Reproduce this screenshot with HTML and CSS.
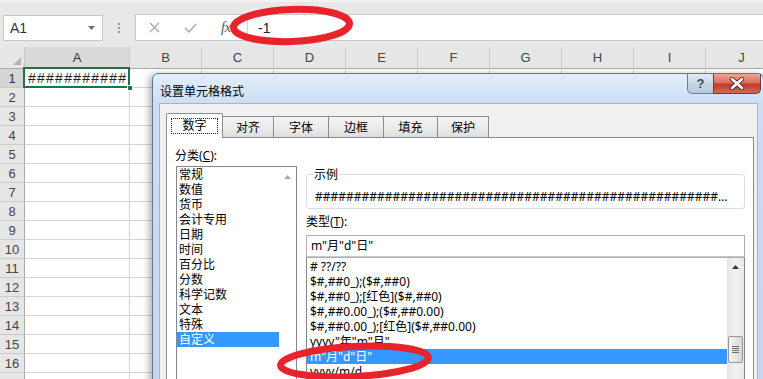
FILE: index.html
```html
<!DOCTYPE html>
<html>
<head>
<meta charset="utf-8">
<title>设置单元格格式</title>
<link rel="stylesheet" href="styles.css">
</head>
<body>
<div class="topbar">
  <div class="namebox"><span>A1</span><svg width="7" height="4" viewBox="0 0 7 4"><path d="M0 0h7L3.5 4z" fill="#707070"/></svg></div>
  <div class="grip"><i></i><i></i><i></i></div>
  <div class="formula">
    <span class="fbtn"><svg width="11" height="11" viewBox="0 0 11 11"><path d="M1 1l9 9M10 1l-9 9" stroke="#a8a8a8" stroke-width="1.3" fill="none"/></svg></span>
    <span class="fbtn"><svg width="13" height="10" viewBox="0 0 13 10"><path d="M1 5l4 4 7-8" fill="none" stroke="#a8a8a8" stroke-width="1.4"/></svg></span>
    <span class="fbtn fx">fx</span>
    <span class="fsep"></span>
    <span class="fval">-1</span>
  </div>
</div>

<div class="sheet">
  <div class="hd corner"><svg width="10" height="10" viewBox="0 0 10 10"><path d="M9 1v8H1z" fill="#b4b4b4"/></svg></div>
  <div class="hd on">A</div><div class="hd">B</div><div class="hd">C</div><div class="hd">D</div><div class="hd">E</div><div class="hd">F</div><div class="hd">G</div><div class="hd">H</div><div class="hd">I</div><div class="hd">J</div>

  <div class="rh on">1</div><div class="c a1"><span class="hash">###########</span><span class="sel"></span><span class="handle"></span></div><div class="c"></div><div class="c"></div><div class="c"></div><div class="c"></div><div class="c"></div><div class="c"></div><div class="c"></div><div class="c"></div><div class="c"></div>
  <div class="rh">2</div><div class="c"></div><div class="c"></div><div class="c"></div><div class="c"></div><div class="c"></div><div class="c"></div><div class="c"></div><div class="c"></div><div class="c"></div><div class="c"></div>
  <div class="rh">3</div><div class="c"></div><div class="c"></div><div class="c"></div><div class="c"></div><div class="c"></div><div class="c"></div><div class="c"></div><div class="c"></div><div class="c"></div><div class="c"></div>
  <div class="rh">4</div><div class="c"></div><div class="c"></div><div class="c"></div><div class="c"></div><div class="c"></div><div class="c"></div><div class="c"></div><div class="c"></div><div class="c"></div><div class="c"></div>
  <div class="rh">5</div><div class="c"></div><div class="c"></div><div class="c"></div><div class="c"></div><div class="c"></div><div class="c"></div><div class="c"></div><div class="c"></div><div class="c"></div><div class="c"></div>
  <div class="rh">6</div><div class="c"></div><div class="c"></div><div class="c"></div><div class="c"></div><div class="c"></div><div class="c"></div><div class="c"></div><div class="c"></div><div class="c"></div><div class="c"></div>
  <div class="rh">7</div><div class="c"></div><div class="c"></div><div class="c"></div><div class="c"></div><div class="c"></div><div class="c"></div><div class="c"></div><div class="c"></div><div class="c"></div><div class="c"></div>
  <div class="rh">8</div><div class="c"></div><div class="c"></div><div class="c"></div><div class="c"></div><div class="c"></div><div class="c"></div><div class="c"></div><div class="c"></div><div class="c"></div><div class="c"></div>
  <div class="rh">9</div><div class="c"></div><div class="c"></div><div class="c"></div><div class="c"></div><div class="c"></div><div class="c"></div><div class="c"></div><div class="c"></div><div class="c"></div><div class="c"></div>
  <div class="rh">10</div><div class="c"></div><div class="c"></div><div class="c"></div><div class="c"></div><div class="c"></div><div class="c"></div><div class="c"></div><div class="c"></div><div class="c"></div><div class="c"></div>
  <div class="rh">11</div><div class="c"></div><div class="c"></div><div class="c"></div><div class="c"></div><div class="c"></div><div class="c"></div><div class="c"></div><div class="c"></div><div class="c"></div><div class="c"></div>
  <div class="rh">12</div><div class="c"></div><div class="c"></div><div class="c"></div><div class="c"></div><div class="c"></div><div class="c"></div><div class="c"></div><div class="c"></div><div class="c"></div><div class="c"></div>
  <div class="rh">13</div><div class="c"></div><div class="c"></div><div class="c"></div><div class="c"></div><div class="c"></div><div class="c"></div><div class="c"></div><div class="c"></div><div class="c"></div><div class="c"></div>
  <div class="rh">14</div><div class="c"></div><div class="c"></div><div class="c"></div><div class="c"></div><div class="c"></div><div class="c"></div><div class="c"></div><div class="c"></div><div class="c"></div><div class="c"></div>
  <div class="rh">15</div><div class="c"></div><div class="c"></div><div class="c"></div><div class="c"></div><div class="c"></div><div class="c"></div><div class="c"></div><div class="c"></div><div class="c"></div><div class="c"></div>
  <div class="rh">16</div><div class="c"></div><div class="c"></div><div class="c"></div><div class="c"></div><div class="c"></div><div class="c"></div><div class="c"></div><div class="c"></div><div class="c"></div><div class="c"></div>
  <div class="rh"></div><div class="c"></div><div class="c"></div><div class="c"></div><div class="c"></div><div class="c"></div><div class="c"></div><div class="c"></div><div class="c"></div><div class="c"></div><div class="c"></div>
</div>

<div class="dialog">
  <div class="titlebar">
    <span class="title">设置单元格格式</span>
    <div class="tbtns">
      <div class="help">?</div>
      <div class="close"><svg width="16" height="13" viewBox="0 0 16 13"><path d="M3 2l10 9M13 2L3 11" stroke="#5a2a22" stroke-width="4.4" stroke-linecap="round" fill="none"/><path d="M3 2l10 9M13 2L3 11" stroke="#fff" stroke-width="2.6" stroke-linecap="round" fill="none"/></svg></div>
    </div>
  </div>
  <div class="client">
    <div class="tabs">
      <div class="tab on w1"><span>数字</span></div>
      <div class="tab w2">对齐</div>
      <div class="tab w3">字体</div>
      <div class="tab w3">边框</div>
      <div class="tab w4">填充</div>
      <div class="tab w2">保护</div>
    </div>
    <div class="panel">
      <div class="left">
        <div class="lbl">分类(<u>C</u>):</div>
        <div class="catlist">
          <div class="catitems">
            <div>常规</div>
            <div>数值</div>
            <div>货币</div>
            <div>会计专用</div>
            <div>日期</div>
            <div>时间</div>
            <div>百分比</div>
            <div>分数</div>
            <div>科学记数</div>
            <div>文本</div>
            <div>特殊</div>
            <div class="on">自定义</div>
          </div>
          <div class="catsb"><svg width="7" height="4" viewBox="0 0 7 4"><path d="M0 4h7L3.5 0z" fill="#a8a8a8"/></svg></div>
        </div>
      </div>
      <div class="right">
        <fieldset class="sample">
          <legend>示例</legend>
          <div class="hashes">################################################################################</div>
        </fieldset>
        <div class="lbl typelbl">类型(<u>T</u>):</div>
        <div class="typein">m"月"d"日"</div>
        <div class="fmtlist">
          <div class="fmtitems">
            <div># ??/??</div>
            <div>$#,##0_);($#,##0)</div>
            <div>$#,##0_);[红色]($#,##0)</div>
            <div>$#,##0.00_);($#,##0.00)</div>
            <div>$#,##0.00_);[红色]($#,##0.00)</div>
            <div>yyyy"年"m"月"</div>
            <div class="on">m"月"d"日"</div>
            <div>yyyy/m/d</div>
          </div>
          <div class="fmtsb">
            <div class="arrow"><svg width="7" height="4" viewBox="0 0 7 4"><path d="M0 4h7L3.5 0z" fill="#333"/></svg></div>
            <div class="thumb"><svg width="7" height="9" viewBox="0 0 7 9"><path d="M0 1.5h7M0 3.5h7M0 5.5h7M0 7.5h7" stroke="#6f6f6f" stroke-width="1"/></svg></div>
          </div>
        </div>
      </div>
    </div>
  </div>
</div>

<svg class="marks" width="763" height="379" viewBox="0 0 763 379">
  <ellipse cx="291.5" cy="25.5" rx="58" ry="16" fill="none" stroke="#e8232b" stroke-width="7" transform="rotate(-2 291.5 25.5)"/>
  <ellipse cx="354.5" cy="361.5" rx="74" ry="15" fill="none" stroke="#e8232b" stroke-width="7" transform="rotate(-3 354.5 361.5)"/>
</svg>
</body>
</html>
```
FILE: styles.css
```css
* { box-sizing: border-box; margin: 0; padding: 0; }
html, body { width: 763px; height: 379px; overflow: hidden; }
body { position: relative; background: #fff; font-family: "Liberation Sans", Arial, sans-serif; color: #222; }

/* formula bar */
.topbar { height: 47px; background: #e8e8e8; display: flex; align-items: flex-start; padding-top: 13px; border-top: 2px solid #f2f2f2; }
.namebox { margin: 0 0 0 3px; width: 100px; height: 26px; background: #fff; border: 1px solid #c6c6c6; display: flex; align-items: center; justify-content: space-between; padding: 0 7px 0 6px; font-size: 14px; color: #333; }
.grip { width: 32px; height: 26px; display: flex; flex-direction: column; align-items: center; justify-content: center; gap: 2px; }
.grip i { display: block; width: 2px; height: 2px; background: #9a9a9a; }
.formula { flex: 1; height: 27px; margin-top: -1px; background: #fff; border: 1px solid #c6c6c6; border-right: 0; display: flex; align-items: center; }
.fbtn { width: 36px; display: flex; justify-content: center; align-items: center; }
.fx { font-family: "Liberation Serif", serif; font-style: italic; font-size: 14px; color: #555; }
.fsep { width: 1px; height: 25px; background: #d4d4d4; margin-left: 3px; }
.fval { margin-left: 10px; font-size: 14px; color: #222; }

/* sheet */
.sheet { display: grid; grid-template-columns: 25px 105px repeat(9, 72px); grid-template-rows: 22px; grid-auto-rows: 19px; }
.hd { background: #e6e6e6; border-right: 1px solid #cacaca; border-bottom: 1px solid #ababab; font-size: 13px; color: #444; display: flex; align-items: center; justify-content: center; }
.hd.on { background: #dadada; color: #333; border-bottom: 2px solid #217346; }
.corner { align-items: flex-end; justify-content: flex-end; padding: 0 2px 2px 0; }
.rh { background: #e6e6e6; border-right: 1px solid #ababab; border-bottom: 1px solid #cacaca; font-size: 13px; color: #444; display: flex; align-items: center; justify-content: center; }
.rh.on { background: #d6d6d6; color: #333; }
.c { border-right: 1px solid #d4d4d4; border-bottom: 1px solid #d4d4d4; }
.a1 { position: relative; display: flex; align-items: center; padding-left: 3px; }
.hash { font-size: 14px; letter-spacing: 1.25px; color: #222; white-space: nowrap; }
.sel { position: absolute; left: -2px; top: -2px; right: -1px; bottom: -1px; border: 2px solid #217346; }
.handle { position: absolute; right: -4px; bottom: -4px; width: 6px; height: 6px; background: #217346; border: 1px solid #fff; }

/* dialog */
.dialog { position: absolute; left: 152px; top: 73px; width: 612px; height: 330px; background: linear-gradient(#e3eefa, #cadef4 30px, #c3d8f0); border: 1px solid #5d7795; border-radius: 6px 6px 0 0; box-shadow: -3px 1px 7px rgba(0, 0, 0, .3); font-family: "Noto Sans", "Noto Sans CJK SC", sans-serif; font-size: 12px; color: #000; }
.titlebar { height: 29px; display: flex; align-items: flex-start; padding: 0 2px 0 7px; }
.title { font-family: "Noto Sans CJK SC", sans-serif; font-size: 12px; line-height: 15px; margin-top: 9px; }
.tbtns { margin-left: auto; display: flex; }
.help { width: 26px; height: 20px; border: 1px solid #6b7f99; border-top: 0; border-right: 0; border-radius: 0 0 0 5px; background: linear-gradient(#e3eaf3, #cad6e4 50%, #b9c8db); display: flex; justify-content: center; align-items: center; font: bold 13px "Liberation Sans", sans-serif; color: #3d4f66; }
.close { width: 48px; height: 20px; border: 1px solid #6b3a3a; border-top: 0; border-radius: 0 0 5px 0; background: linear-gradient(#eaa79a, #d8705d 45%, #c23a27 55%, #d66a55); display: flex; justify-content: center; align-items: center; }

.client { margin: 0 5px 0 6px; height: 300px; background: #f0f0f0; border: 1px solid #a6b6ca; padding: 9px 0 0 6px; }
.tabs { display: flex; align-items: flex-end; height: 24px; position: relative; z-index: 1; }
.tab { height: 21px; border: 1px solid #898c95; border-bottom: 0; margin-left: -1px; background: linear-gradient(#f4f4f4, #ececec 50%, #dedede); display: flex; align-items: center; justify-content: center; font-size: 12px; line-height: 15px; }
.tab.on { height: 25px; margin-left: 0; margin-bottom: -1px; background: #fff; border-radius: 2px 2px 0 0; }
.tab.on span { border: 1px dotted #222; padding: 0 10px; line-height: 14px; }
.w1 { width: 57px; }
.w2 { width: 52px; }
.w3 { width: 56px; }
.w4 { width: 55px; }

.panel { width: 588px; height: 260px; background: #fff; border: 1px solid #898c95; display: flex; gap: 9px; padding: 10px 0 0 8px; }
.left { width: 122px; }
.lbl { font-size: 12px; line-height: 15px; }
.catlist { margin: 3px 0 0 1px; width: 121px; height: 240px; border: 1px solid #828790; display: flex; background: #fff; }
.catitems { flex: 1; }
.catitems div { height: 15px; line-height: 15px; padding-left: 2px; white-space: nowrap; }
.catitems .on, .fmtitems .on { background: #3399ff; color: #fff; }
.catsb { width: 17px; display: flex; justify-content: center; padding-top: 8px; }

.right { width: 439px; }
.sample { margin-top: 19px; border: 1px solid #d5dfe5; border-radius: 3px; padding: 0 6px 4px; }
.sample legend { font-size: 12px; line-height: 15px; padding: 0 1px; }
.hashes { width: 419px; margin: 7px 0 0 2px; line-height: 15px; white-space: nowrap; overflow: hidden; text-overflow: ellipsis; }
.typelbl { margin-top: 5px; }
.typein { margin-top: 6px; height: 22px; border: 1px solid #abadb3; border-bottom-color: #c8c8c8; padding-left: 4px; line-height: 20px; white-space: nowrap; }
.fmtlist { display: flex; height: 130px; border: 1px solid #828790; border-top-color: #abadb3; }
.fmtitems { flex: 1; padding-top: 1px; }
.fmtitems div { height: 15px; line-height: 15px; padding-left: 3px; white-space: nowrap; }
.fmtsb { width: 17px; background: linear-gradient(90deg, #e6e6e6, #f2f2f2 50%, #e8e8e8); display: flex; flex-direction: column; align-items: center; }
.arrow { height: 17px; display: flex; align-items: center; justify-content: center; }
.thumb { margin-top: 61px; width: 15px; height: 27px; border: 1px solid #979797; border-radius: 2px; background: linear-gradient(90deg, #f4f4f4, #e6e6e6 50%, #d6d6d6); display: flex; align-items: center; justify-content: center; }

.marks { position: absolute; left: 0; top: 0; z-index: 10; pointer-events: none; }
```
